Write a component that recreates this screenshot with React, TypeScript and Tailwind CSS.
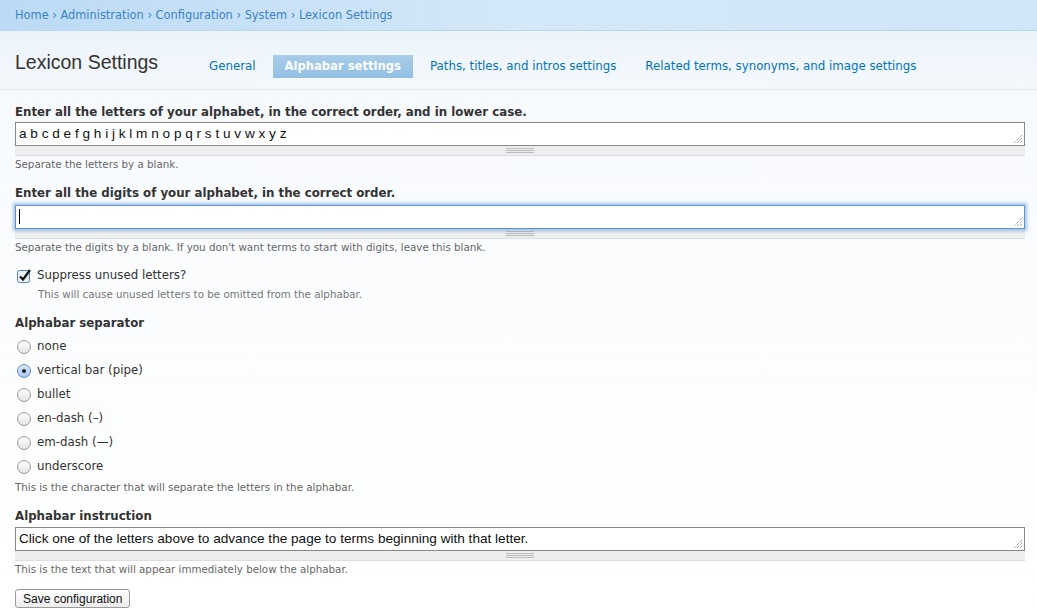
import React from 'react';

const font = { fontFamily: '"DejaVu Sans", Verdana, sans-serif' };
const sans = { fontFamily: '"Liberation Sans", Arial, sans-serif' };

const Grip: React.FC = () => (
  <div className="h-[10px] bg-[#eeeeee] border-b border-[#dddddd] flex items-center justify-center">
    <div className="w-[28px] h-[5px] border-t border-b border-[#bbbbbb] flex items-center">
      <div className="w-full h-px bg-[#bbbbbb]" />
    </div>
  </div>
);

const ResizeCorner: React.FC = () => (
  <svg className="absolute right-[2px] bottom-[2px]" width="8" height="8" viewBox="0 0 8 8">
    <path d="M8 0L0 8M8 3L3 8M8 6L6 8" stroke="#777" strokeWidth="1" strokeDasharray="1 1" />
  </svg>
);

const TextArea: React.FC<{ value?: string; focused?: boolean }> = ({ value, focused }) => (
  <div className="w-[1010px]">
    <div
      className={`relative h-[24px] bg-white border ${
        focused
          ? 'border-[#5b96d3] shadow-[0_0_3px_2px_rgba(110,160,220,0.6)]'
          : 'border-[#888888]'
      }`}
    >
      <div className="px-[3px] pt-[3px] text-[13.6px] leading-[16px] text-[#111] whitespace-nowrap" style={sans}>
        {value}
        {focused && <span className="inline-block w-px h-[15px] bg-black align-top" />}
      </div>
      <ResizeCorner />
    </div>
    <Grip />
  </div>
);

const Label: React.FC<{ children: React.ReactNode; className?: string }> = ({ children, className }) => (
  <div className={`text-[11.8px] font-bold text-[#333] leading-[16px] ${className ?? ''}`}>{children}</div>
);

const Desc: React.FC<{ children: React.ReactNode; className?: string }> = ({ children, className }) => (
  <div className={`text-[10.3px] text-[#666] leading-[14px] ${className ?? ''}`}>{children}</div>
);

const Radio: React.FC<{ label: string; checked?: boolean }> = ({ label, checked }) => (
  <div className="flex items-center h-[24px]">
    <div
      className={`ml-[2px] w-[14px] h-[14px] rounded-full border flex items-center justify-center ${
        checked
          ? 'border-[#6b8fc0] bg-gradient-to-b from-[#d9e9fa] to-[#a9c9ef]'
          : 'border-[#9a9a9a] bg-gradient-to-b from-[#ffffff] to-[#e4e4e4]'
      }`}
    >
      {checked && <div className="w-[4px] h-[4px] rounded-full bg-[#222]" />}
    </div>
    <span className="ml-[6px] text-[11.8px] text-[#333]">{label}</span>
  </div>
);

export default function App() {
  const tabs = ['General', 'Alphabar settings', 'Paths, titles, and intros settings', 'Related terms, synonyms, and image settings'];
  return (
    <div className="w-[1037px] h-[609px] overflow-hidden bg-white" style={font}>
      <div className="h-[31px] bg-gradient-to-r from-[#bcdaf5] via-[#d3e8f8] to-[#cfe5f8] border-b border-[#b9d6f0] flex items-center px-[15px]">
        <div className="text-[11.4px] text-[#3b84c8] mt-[1px]">
          Home › Administration › Configuration › System › Lexicon Settings
        </div>
      </div>
      <div className="h-[59px] bg-gradient-to-b from-[#ecf4fb] to-[#f4f8fc] border-b border-[#e2e8ee] flex items-start pl-[15px]">
        <h1 className="text-[19.5px] leading-[24px] mt-[19px] text-[#333] w-[182px]" style={sans}>
          Lexicon Settings
        </h1>
        <div className="flex items-center gap-[5px] mt-[24px]">
          {tabs.map((t, i) => (
            <div
              key={t}
              className={`h-[23px] px-[12px] flex items-center ${
                i === 1
                  ? 'bg-gradient-to-b from-[#a8cde9] to-[#92bfe2] text-white font-bold text-[11.6px]'
                  : 'text-[#0074bd] text-[11.8px]'
              }`}
            >
              {t}
            </div>
          ))}
        </div>
      </div>
      <div className="px-[15px] pt-[14px] bg-gradient-to-b from-[#f7fafd] to-white">
        <Label>Enter all the letters of your alphabet, in the correct order, and in lower case.</Label>
        <div className="mt-[2px]">
          <TextArea value="a b c d e f g h i j k l m n o p q r s t u v w x y z" />
        </div>
        <Desc className="mt-[1px]">Separate the letters by a blank.</Desc>

        <Label className="mt-[14px]">Enter all the digits of your alphabet, in the correct order.</Label>
        <div className="mt-[4px]">
          <TextArea focused />
        </div>
        <Desc className="mt-[1px]">Separate the digits by a blank. If you don't want terms to start with digits, leave this blank.</Desc>

        <div className="flex items-center mt-[13px] h-[18px]">
          <svg width="16" height="16" viewBox="0 0 16 16" className="ml-[1px]">
            <rect x="1.5" y="2.5" width="12" height="12" rx="2" fill="#e6effa" stroke="#5a7fb5" />
            <path d="M4 8.5L7 11.5L14 2" stroke="#111" strokeWidth="2.2" fill="none" />
          </svg>
          <span className="ml-[5px] text-[11.8px] text-[#333]">Suppress unused letters?</span>
        </div>
        <Desc className="ml-[23px] mt-[2px] text-[#777]">This will cause unused letters to be omitted from the alphabar.</Desc>

        <Label className="mt-[14px]">Alphabar separator</Label>
        <div className="mt-[4px]">
          <Radio label="none" />
          <Radio label="vertical bar (pipe)" checked />
          <Radio label="bullet" />
          <Radio label="en-dash (–)" />
          <Radio label="em-dash (—)" />
          <Radio label="underscore" />
        </div>
        <Desc className="mt-[1px]">This is the character that will separate the letters in the alphabar.</Desc>

        <Label className="mt-[14px]">Alphabar instruction</Label>
        <div className="mt-[3px]">
          <TextArea value="Click one of the letters above to advance the page to terms beginning with that letter." />
        </div>
        <Desc className="mt-[1px]">This is the text that will appear immediately below the alphabar.</Desc>

        <button
          className="mt-[13px] h-[19px] px-[7px] text-[12px] text-[#111] bg-gradient-to-b from-white to-[#ececec] border border-[#9a9a9a] rounded-[3px] leading-[16px] block"
          style={sans}
        >
          Save configuration
        </button>
      </div>
    </div>
  );
}
